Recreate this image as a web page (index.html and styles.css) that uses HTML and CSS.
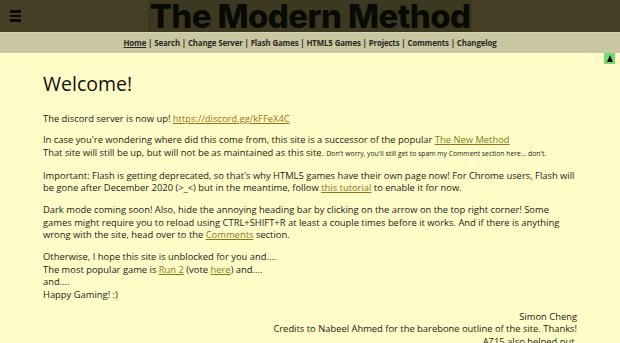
FILE: index.html
```html
<!DOCTYPE html>
<html>
<head>
<meta charset="utf-8">
<link rel="stylesheet" href="styles.css">
</head>
<body>
<header class="top">
  <div class="menu"><span></span><span></span><span></span></div>
  <h1 class="title">The Modern Method</h1>
</header>
<nav class="nav">
  <a class="cur" href="#">Home</a> | <a href="#">Search</a> | <a href="#">Change Server</a> | <a href="#">Flash Games</a> | <a href="#">HTML5 Games</a> | <a href="#">Projects</a> | <a href="#">Comments</a> | <a href="#">Changelog</a>
</nav>
<div class="toggle"><span class="tri"></span></div>
<main class="content">
  <h2 class="welcome">Welcome!</h2>
  <p>The discord server is now up! <a href="#">https://discord.gg/kFFeX4C</a></p>
  <p>In case you're wondering where did this come from, this site is a successor of the popular <a href="#">The New Method</a><br>That site will still be up, but will not be as maintained as this site. <small>Don't worry, you'll still get to spam my Comment section here... don't.</small></p>
  <p>Important: Flash is getting deprecated, so that's why HTML5 games have their own page now! For Chrome users, Flash will be gone after December 2020 (&gt;_&lt;) but in the meantime, follow <a href="#">this tutorial</a> to enable it for now.</p>
  <p>Dark mode coming soon! Also, hide the annoying heading bar by clicking on the arrow on the top right corner! Some games might require you to reload using CTRL+SHIFT+R at least a couple times before it works. And if there is anything wrong with the site, head over to the <a href="#">Comments</a> section.</p>
  <p>Otherwise, I hope this site is unblocked for you and....<br>The most popular game is <a href="#">Run 2</a> (vote <a href="#">here</a>) and....<br>and....<br>Happy Gaming! :)</p>
  <p class="sign">Simon Cheng<br>Credits to Nabeel Ahmed for the barebone outline of the site. Thanks!<br>AZ15 also helped out.</p>
</main>
</body>
</html>
```
FILE: styles.css
```css
html, body {
  margin: 0;
  padding: 0;
  background: #fffcc8;
  color: #1c1c14;
  font-family: "Open Sans", "Liberation Sans", sans-serif;
}
.top {
  height: 32px;
  background: #453f26;
  display: flex;
  justify-content: center;
  align-items: stretch;
  position: relative;
}
.menu {
  position: absolute;
  left: 10px;
  top: 10px;
  width: 11px;
  display: flex;
  flex-direction: column;
  gap: 2px;
}
.menu span {
  display: block;
  height: 2.5px;
  background: #0a0a05;
}
.title {
  margin: 0;
  padding: 0 2px;
  background: #3d3920;
  color: #0a0a05;
  font-family: Inter, Roboto, sans-serif;
  font-weight: 800;
  font-size: 33px;
  line-height: 33px;
  height: 32px;
  letter-spacing: -0.6px;
}
.nav {
  height: 21px;
  background: #c9c6a2;
  border-top: 1px solid #d6d3b2;
  box-sizing: border-box;
  text-align: center;
  font-size: 7.9px;
  font-weight: 700;
  line-height: 20px;
  color: #2b2a1e;
  letter-spacing: -0.15px;
}
.nav a {
  color: #2b2a1e;
  text-decoration: none;
}
.nav a.cur {
  text-decoration: underline;
}
.toggle {
  position: absolute;
  right: 5px;
  top: 53px;
  width: 11px;
  height: 11px;
  background: #6fdc6f;
  display: flex;
  justify-content: center;
  align-items: center;
}
.tri {
  width: 0;
  height: 0;
  border-left: 3.5px solid transparent;
  border-right: 3.5px solid transparent;
  border-bottom: 7px solid #000;
}
.content {
  padding: 0 43px;
  font-size: 9.4px;
  line-height: 12.8px;
}
.welcome {
  margin: 16px 0 14px;
  font-size: 19.5px;
  font-weight: 500;
  line-height: 30px;
  color: #111;
}
.content p {
  margin: 0 0 8.6px;
}
.content a {
  color: #8a7a14;
  text-decoration: underline;
}
small {
  font-size: 6.8px;
}
.sign {
  text-align: right;
  margin-top: 8.6px;
}
```
